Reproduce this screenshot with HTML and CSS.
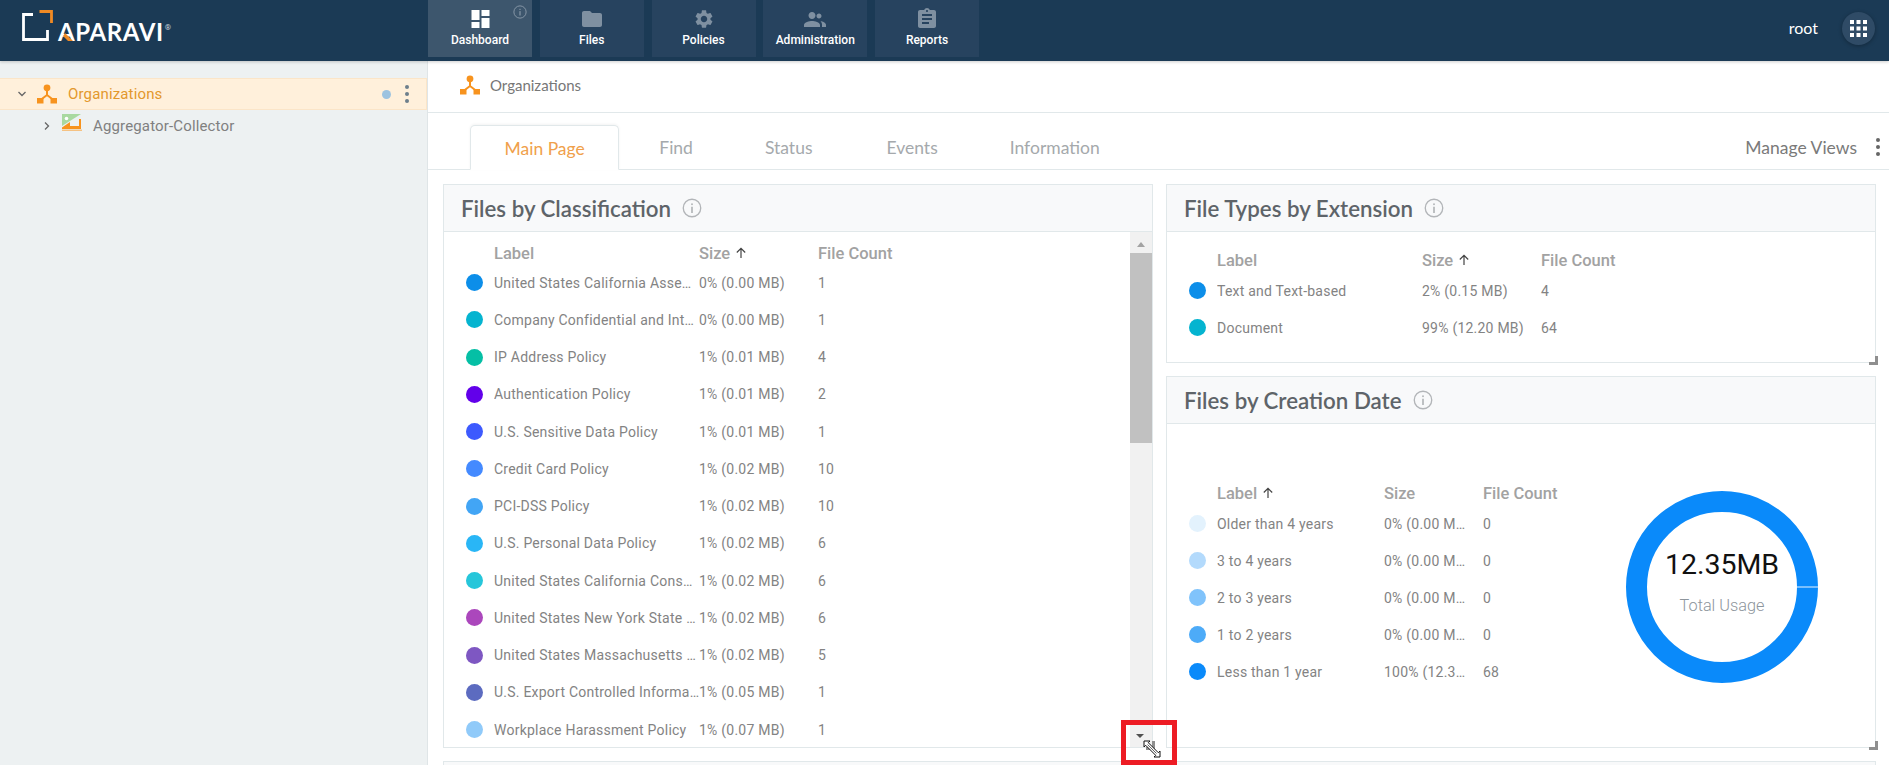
FILE: index.html
```html
<!DOCTYPE html>
<html lang="en">
<head>
<meta charset="utf-8">
<title>Aparavi Dashboard</title>
<link rel="stylesheet" href="styles.css">
</head>
<body>
<svg class="defs" width="0" height="0">
  <defs>
    <symbol id="org" viewBox="0 0 20 20">
      <circle cx="10" cy="3.800" r="3.400" fill="currentColor"/>
      <path d="M10 5v6.500M10 11l-6.500 5M10 11l6.500 5" stroke="currentColor" stroke-width="2" fill="none"/>
      <rect x="0" y="14" width="6.500" height="5.500" fill="currentColor"/>
      <rect x="13.500" y="14" width="6.500" height="5.500" fill="currentColor"/>
    </symbol>
    <symbol id="info" viewBox="0 0 24 24">
      <circle cx="12" cy="12" r="10.500" fill="none" stroke="currentColor" stroke-width="1.600"/>
      <rect x="11" y="10.500" width="2" height="7.500" fill="currentColor"/>
      <rect x="11" y="6.500" width="2" height="2" fill="currentColor"/>
    </symbol>
    <symbol id="up" viewBox="0 0 12 12">
      <path d="M6 11V1.500M1.800 5.500L6 1.300l4.200 4.200" fill="none" stroke="currentColor" stroke-width="1.200"/>
    </symbol>
  </defs>
</svg>

<header class="topbar">
  <div class="logo">
    <svg class="logo-mark" viewBox="0 0 31 31" width="31" height="31">
      <path d="M11 4.500H1.500V29.500H25.500V20" fill="none" stroke="#fff" stroke-width="2.800"/>
      <path d="M17.500 1.500H29.500V13" fill="none" stroke="#f08a24" stroke-width="2.800"/>
    </svg>
    <span class="logo-text">APARAVI</span><span class="logo-reg">®</span>
    <svg class="logo-wedge" viewBox="0 0 10 8" width="10" height="8"><path d="M2 0l8 8H5L0 3z" fill="#f08a24"/></svg>
  </div>
  <nav class="nav">
    <a class="nav-item active">
      <svg class="nav-icon i-dash" viewBox="3 3 18 18"><path d="M3 13h8V3H3v10zm0 8h8v-6H3v6zm10 0h8V11h-8v10zm0-18v6h8V3h-8z"/></svg>
      <span>Dashboard</span>
      <svg class="nav-info"><use href="#info"/></svg>
    </a>
    <a class="nav-item">
      <svg class="nav-icon dim i-files" viewBox="2 4 20 16"><path d="M10 4H4c-1.100 0-2 .9-2 2v12c0 1.100.9 2 2 2h16c1.100 0 2-.9 2-2V8c0-1.100-.9-2-2-2h-8l-2-2z"/></svg>
      <span>Files</span>
    </a>
    <a class="nav-item">
      <svg class="nav-icon dim i-gear" viewBox="2.500 2 19 20"><path d="M19.140 12.940c.04-.3.06-.61.06-.94 0-.32-.02-.64-.07-.94l2.030-1.580c.18-.14.23-.41.12-.61l-1.920-3.320c-.12-.22-.37-.29-.59-.22l-2.390.96c-.5-.38-1.030-.7-1.620-.94l-.36-2.540c-.04-.24-.24-.41-.48-.41h-3.840c-.24 0-.43.17-.47.41l-.36 2.540c-.59.24-1.130.57-1.620.94l-2.390-.96c-.22-.08-.47 0-.59.22L2.740 8.870c-.12.21-.08.47.12.61l2.030 1.580c-.05.3-.09.63-.09.94s.02.64.07.94l-2.030 1.580c-.18.14-.23.41-.12.61l1.920 3.320c.12.22.37.29.59.22l2.390-.96c.5.38 1.030.7 1.620.94l.36 2.540c.05.24.24.41.48.41h3.840c.24 0 .44-.17.47-.41l.36-2.540c.59-.24 1.130-.56 1.620-.94l2.390.96c.22.08.47 0 .59-.22l1.920-3.320c.12-.22.07-.47-.12-.61l-2.010-1.580zM12 15.600c-1.980 0-3.600-1.620-3.600-3.600s1.620-3.600 3.600-3.600 3.600 1.620 3.600 3.600-1.620 3.600-3.600 3.600z"/></svg>
      <span>Policies</span>
    </a>
    <a class="nav-item">
      <svg class="nav-icon dim i-people" viewBox="1 5 22 15"><path d="M9 12c1.930 0 3.500-1.570 3.500-3.500S10.930 5 9 5 5.500 6.570 5.500 8.500 7.070 12 9 12zm0 2c-2.670 0-8 1.340-8 4v2h16v-2c0-2.660-5.330-4-8-4zm7-2.500c1.380 0 2.500-1.120 2.500-2.500S17.380 6.500 16 6.500 13.500 7.620 13.500 9s1.120 2.500 2.500 2.500zm1.500 2.600c1.900.5 5.500 1.700 5.500 3.900v2h-4v-2.300c0-1.400-.7-2.600-1.500-3.600z"/></svg>
      <span>Administration</span>
    </a>
    <a class="nav-item">
      <svg class="nav-icon dim i-rep" viewBox="3 1 18 20"><path d="M19 3h-4.180C14.400 1.840 13.300 1 12 1c-1.300 0-2.400.84-2.820 2H5c-1.100 0-2 .9-2 2v14c0 1.100.9 2 2 2h14c1.100 0 2-.9 2-2V5c0-1.100-.9-2-2-2zm-7 0c.55 0 1 .45 1 1s-.45 1-1 1-1-.45-1-1 .45-1 1-1zm2 14H7v-2h7v2zm3-4H7v-2h10v2zm0-4H7V7h10v2z"/></svg>
      <span>Reports</span>
    </a>
  </nav>
  <div class="user">
    <span class="user-name">root</span>
    <span class="apps">
      <svg viewBox="0 0 17 17" width="17" height="17" fill="#fff">
        <rect x="0" y="0" width="4" height="4"/><rect x="6.500" y="0" width="4" height="4"/><rect x="13" y="0" width="4" height="4"/>
        <rect x="0" y="6.500" width="4" height="4"/><rect x="6.500" y="6.500" width="4" height="4"/><rect x="13" y="6.500" width="4" height="4"/>
        <rect x="0" y="13" width="4" height="4"/><rect x="6.500" y="13" width="4" height="4"/><rect x="13" y="13" width="4" height="4"/>
      </svg>
    </span>
  </div>
</header>

<div class="body-row">
  <aside class="sidebar">
    <div class="tree-row selected">
      <svg class="chev" viewBox="0 0 10 10"><path d="M1.500 3l3.500 3.500L8.500 3" fill="none" stroke="#666" stroke-width="1.300"/></svg>
      <svg class="org-icon"><use href="#org"/></svg>
      <span class="tree-label">Organizations</span>
      <span class="status-dot"></span>
      <span class="kebab"><i></i><i></i><i></i></span>
    </div>
    <div class="tree-row child">
      <svg class="chev" viewBox="0 0 10 10"><path d="M3 1.500L6.500 5 3 8.500" fill="none" stroke="#666" stroke-width="1.300"/></svg>
      <svg class="agg-icon" viewBox="0 0 20 17" width="20" height="17">
        <path d="M0 0h19L0 12z" fill="#a9d9a0"/>
        <circle cx="4.500" cy="4.500" r="1.800" fill="#fff"/>
        <path d="M0 13.500L8 8v4h9V5h2v10H0z" fill="#f7931e"/>
        <path d="M0 15.500h20V17H0z" fill="#f5c283"/>
      </svg>
      <span class="tree-label">Aggregator-Collector</span>
    </div>
  </aside>

  <main class="content">
    <div class="crumbs">
      <svg class="org-icon small"><use href="#org"/></svg>
      <span>Organizations</span>
    </div>
    <div class="tabs">
      <a class="tab active">Main Page</a>
      <a class="tab">Find</a>
      <a class="tab">Status</a>
      <a class="tab spaced">Events</a>
      <a class="tab">Information</a>
      <span class="views">Manage Views</span>
      <span class="kebab dark"><i></i><i></i><i></i></span>
    </div>

    <div class="board">
      <section class="panel tall">
        <h2 class="panel-head">Files by Classification <svg class="info"><use href="#info"/></svg></h2>
        <div class="scroll-body">
          <div class="table t-class">
            <div class="row head"><span></span><span>Label</span><span>Size <svg class="up"><use href="#up"/></svg></span><span>File Count</span></div>
            <div class="row"><i class="dot c1"></i><span class="label">United States California Assembly Bill 1</span><span>0% (0.00 MB)</span><span>1</span></div>
            <div class="row"><i class="dot c2"></i><span class="label">Company Confidential and Internal Policy</span><span>0% (0.00 MB)</span><span>1</span></div>
            <div class="row"><i class="dot c3"></i><span class="label">IP Address Policy</span><span>1% (0.01 MB)</span><span>4</span></div>
            <div class="row"><i class="dot c4"></i><span class="label">Authentication Policy</span><span>1% (0.01 MB)</span><span>2</span></div>
            <div class="row"><i class="dot c5"></i><span class="label">U.S. Sensitive Data Policy</span><span>1% (0.01 MB)</span><span>1</span></div>
            <div class="row"><i class="dot c6"></i><span class="label">Credit Card Policy</span><span>1% (0.02 MB)</span><span>10</span></div>
            <div class="row"><i class="dot c7"></i><span class="label">PCI-DSS Policy</span><span>1% (0.02 MB)</span><span>10</span></div>
            <div class="row"><i class="dot c8"></i><span class="label">U.S. Personal Data Policy</span><span>1% (0.02 MB)</span><span>6</span></div>
            <div class="row"><i class="dot c9"></i><span class="label">United States California Consumer Privacy</span><span>1% (0.02 MB)</span><span>6</span></div>
            <div class="row"><i class="dot c10"></i><span class="label">United States New York State Privacy Act</span><span>1% (0.02 MB)</span><span>6</span></div>
            <div class="row"><i class="dot c11"></i><span class="label">United States Massachusetts Data Privacy</span><span>1% (0.02 MB)</span><span>5</span></div>
            <div class="row"><i class="dot c12"></i><span class="label wide">U.S. Export Controlled Information Policy</span><span>1% (0.05 MB)</span><span>1</span></div>
            <div class="row"><i class="dot c13"></i><span class="label">Workplace Harassment Policy</span><span>1% (0.07 MB)</span><span>1</span></div>
          </div>
          <div class="scrollbar">
            <span class="arrow-up"></span>
            <span class="thumb"></span>
            <span class="arrow-down"></span>
          </div>
        </div>
        <span class="handle"></span>
      </section>

      <div class="stack">
        <section class="panel short">
          <h2 class="panel-head">File Types by Extension <svg class="info"><use href="#info"/></svg></h2>
          <div class="table t-types">
            <div class="row head"><span></span><span>Label</span><span>Size <svg class="up"><use href="#up"/></svg></span><span>File Count</span></div>
            <div class="row"><i class="dot c1"></i><span class="label">Text and Text-based</span><span>2% (0.15 MB)</span><span>4</span></div>
            <div class="row"><i class="dot c2"></i><span class="label">Document</span><span>99% (12.20 MB)</span><span>64</span></div>
          </div>
          <span class="handle"></span>
        </section>
        <section class="panel grow">
          <h2 class="panel-head">Files by Creation Date <svg class="info"><use href="#info"/></svg></h2>
          <div class="date-body">
            <div class="table t-date">
              <div class="row head"><span></span><span>Label <svg class="up"><use href="#up"/></svg></span><span>Size</span><span>File Count</span></div>
              <div class="row"><i class="dot d1"></i><span class="label">Older than 4 years</span><span class="label size-cell">0% (0.00 MB)</span><span>0</span></div>
              <div class="row"><i class="dot d2"></i><span class="label">3 to 4 years</span><span class="label size-cell">0% (0.00 MB)</span><span>0</span></div>
              <div class="row"><i class="dot d3"></i><span class="label">2 to 3 years</span><span class="label size-cell">0% (0.00 MB)</span><span>0</span></div>
              <div class="row"><i class="dot d4"></i><span class="label">1 to 2 years</span><span class="label size-cell">0% (0.00 MB)</span><span>0</span></div>
              <div class="row"><i class="dot d5"></i><span class="label">Less than 1 year</span><span class="label size-cell">100% (12.35 MB)</span><span>68</span></div>
            </div>
            <div class="donut">
              <svg viewBox="0 0 192 192" width="192" height="192">
                <circle cx="96" cy="96" r="85.500" fill="none" stroke="#0a8afa" stroke-width="21"/>
                <path d="M171 96h21" stroke="#e8f4ff" stroke-width="1"/>
              </svg>
              <div class="donut-text">
                <strong>12.35MB</strong>
                <span>Total Usage</span>
              </div>
            </div>
          </div>
          <span class="handle"></span>
        </section>
      </div>

      <section class="panel peek"></section>
      <section class="panel peek"></section>
    </div>
  </main>
</div>

<div class="callout">
  <svg class="cursor" viewBox="0 0 18 18" width="18" height="18">
    <path d="M1 1h6L5.300 2.700l10 10L17 11v6h-6l1.700-1.700-10-10L1 7z" fill="#fff" stroke="#111" stroke-width="1"/>
    <path d="M4.500 4.500l9 9" stroke="#666" stroke-width="1"/>
  </svg>
</div>
</body>
</html>
```
FILE: styles.css
```css
* { box-sizing: border-box; }
html, body { margin: 0; height: 765px; overflow: hidden; }
body { font-family: Roboto, "Liberation Sans", sans-serif; color: #777; background: #fff; position: relative; }
.defs { position: absolute; }

.topbar { height: 61px; background: #1b3a55; display: flex; align-items: flex-start; box-shadow: 0 1px 3px rgba(0,0,0,.2); position: relative; }
.logo { width: 428px; flex: none; height: 61px; display: flex; align-items: flex-start; padding: 10px 0 0 22px; color: #fff; position: relative; }
.logo-mark { display: block; flex: none; }
.logo-text { font-family: Lato, sans-serif; font-weight: 700; font-size: 24px; line-height: 24px; margin: 10px 0 0 5px; letter-spacing: .6px; }
.logo-reg { font-size: 8px; margin: 13px 0 0 1px; color: #cfd6dc; }
.logo-wedge { position: absolute; left: 63px; top: 33px; }

.nav { display: flex; gap: 7.750px; }
.nav-item { width: 104px; height: 57px; background: #27435f; display: flex; flex-direction: column; align-items: center; position: relative; color: #fff; font-size: 12px; font-weight: 500; }
.nav-item.active { background: #3d566d; }
.nav-item > span { position: absolute; top: 32px; line-height: 16px; }
.nav-icon { fill: #fff; display: block; }
.nav-icon.dim { fill: #7f90a1; }
.i-dash { width: 19px; height: 18px; margin-top: 10px; }
.i-files { width: 20px; height: 16px; margin-top: 11px; }
.i-gear { width: 20px; height: 18px; margin-top: 10px; }
.i-people { width: 22px; height: 15px; margin-top: 12px; }
.i-rep { width: 18px; height: 20px; margin-top: 8px; }
.nav-info { position: absolute; top: 5px; right: 5px; width: 14px; height: 14px; color: #8a9aa9; }

.user { margin-left: auto; display: flex; align-items: center; height: 57px; padding-right: 14px; }
.user-name { color: #fff; font-family: Lato, sans-serif; font-size: 16px; margin-right: 24px; padding-bottom: 2px; }
.apps { width: 33px; height: 33px; border-radius: 50%; background: #2f4b66; display: flex; align-items: center; justify-content: center; box-shadow: 0 1px 4px rgba(0,0,0,.3); }

.body-row { display: flex; height: 704px; }
.sidebar { width: 428px; flex: none; background: #edf1f2; border-right: 1px solid #dfe5e7; padding-top: 17px; }
.tree-row { display: flex; align-items: center; font-size: 15px; letter-spacing: .15px; }
.tree-row.selected { height: 32px; background: #fff0db; border: 1px solid #fbe5c8; border-left: 0; color: #e3982c; padding-left: 17px; }
.chev { width: 10px; height: 10px; flex: none; }
.org-icon { width: 20px; height: 20px; color: #f7931e; margin-left: 10px; flex: none; }
.org-icon.small { width: 20px; height: 20px; margin: 0 10px 0 0; }
.tree-label { margin-left: 11px; }
.status-dot { width: 9px; height: 9px; border-radius: 50%; background: #9dc3e0; margin-left: auto; margin-right: 14px; }
.kebab { display: flex; flex-direction: column; gap: 3px; margin-right: 17px; }
.kebab i { width: 4px; height: 4px; border-radius: 50%; background: #6d7f8c; display: block; }
.kebab.dark { margin: 0 0 0 19px; }
.kebab.dark i { background: #666; }
.tree-row.child { padding-left: 42px; height: 32px; color: #808080; }
.agg-icon { margin-left: 10px; margin-top: -8px; flex: none; }
.child .tree-label { margin-left: 11px; }

.content { flex: 1; min-width: 0; }
.crumbs { height: 52px; border-bottom: 1px solid #e1e8ea; display: flex; align-items: center; padding: 0 0 3px 32px; font-family: Lato, sans-serif; font-size: 15px; color: #777; }
.tabs { height: 57px; border-bottom: 1px solid #e1e8ea; display: flex; align-items: center; padding: 12px 9px 0 42px; font-family: Lato, sans-serif; font-size: 17.500px; color: #a5a9ac; }
.tab { padding: 0 36px; }
.tab.spaced { margin-left: 2px; }
.tab.active { height: 45px; padding: 0 33.500px; line-height: 46px; align-self: flex-end; margin-bottom: -1px; color: #f0a04b; background: #fff; border: 1px solid #e1e8ea; border-bottom: 1px solid #fff; border-radius: 5px 5px 0 0; box-shadow: 0 -1px 3px rgba(0,0,0,.05); margin-right: 4px; }
.views { margin-left: auto; color: #7a7a7a; font-size: 17.500px; }

.board { display: grid; grid-template-columns: 710px 710px; grid-template-rows: 564px 40px; column-gap: 13px; row-gap: 13px; padding: 14px 0 0 15px; }
.panel { border: 1px solid #e1e8ea; background: #fff; position: relative; }
.panel-head { height: 47px; margin: 0; padding: 0 0 0 17px; background: #f8f9fa; border-bottom: 1px solid #e1e8ea; display: flex; align-items: center; font-family: Lato, sans-serif; font-size: 22.300px; font-weight: 600; color: #5e6469; }
.info { width: 20px; height: 20px; color: #b2b5b8; margin-left: 11px; }
.stack { display: flex; flex-direction: column; gap: 13px; min-height: 0; }
.panel.short { height: 179px; }
.panel.grow { flex: 1; }
.panel.peek { background: #f8f9fa; }
.handle { position: absolute; right: -3px; bottom: -3px; width: 9px; height: 9px; border-right: 3px solid #8f8f8f; border-bottom: 3px solid #8f8f8f; }

.scroll-body { display: flex; height: 515px; overflow: hidden; }
.table { font-size: 14px; letter-spacing: .23px; color: #838383; }
.t-class { flex: 1; padding: 11px 0 0 17px; }
.row { display: grid; align-items: center; height: 37.100px; }
.t-class .row { height: 37.250px; }
.row.head, .t-class .row.head { height: 21px; font-size: 16.500px; font-weight: 500; color: #a2a2a2; letter-spacing: 0; }
.t-class .row { grid-template-columns: 33px 205px 119px 1fr; }
.t-types { padding: 16px 0 0 17px; }
.t-types .row.head { height: 24px; }
.t-types .row { grid-template-columns: 33px 205px 119px 1fr; }
.date-body { display: flex; padding: 0 0 0 17px; }
.t-date { padding-top: 58px; width: 442px; flex: none; }
.t-date .row.head { height: 23px; }
.t-date .row { grid-template-columns: 33px 167px 99px 1fr; }
.up { width: 12px; height: 12px; color: #444; margin-left: 1px; }
.label { white-space: nowrap; overflow: hidden; text-overflow: ellipsis; padding-right: 1px; }
.label.wide { margin-right: -3px; }
.label.size-cell { padding-right: 16px; }
.dot { width: 17px; height: 17px; border-radius: 50%; display: block; margin-left: 5px; }

.c1 { background: #0c8ee9; } .c2 { background: #05b4d0; } .c3 { background: #05bfa5; }
.c4 { background: #6200ea; } .c5 { background: #3d5afe; } .c6 { background: #448aff; }
.c7 { background: #42a5f5; } .c8 { background: #29b6f6; } .c9 { background: #26c6da; }
.c10 { background: #ab47bc; } .c11 { background: #7e57c2; } .c12 { background: #5c6bc0; }
.c13 { background: #90caf9; }
.d1 { background: #e3f2fd; } .d2 { background: #b3dafc; } .d3 { background: #80c3fb; }
.d4 { background: #4dabf8; } .d5 { background: #0a8afa; }

.scrollbar { width: 22px; flex: none; background: #f1f1f1; position: relative; }
.thumb { position: absolute; top: 21px; left: 0; width: 100%; height: 190px; background: #c1c1c1; }
.arrow-up { position: absolute; top: 10px; left: 7px; border: 4px solid transparent; border-top: 0; border-bottom: 5px solid #a3a3a3; }
.arrow-down { position: absolute; bottom: 9px; left: 6px; border: 4.500px solid transparent; border-bottom: 0; border-top: 4px solid #505050; }

.donut { position: relative; width: 192px; height: 192px; margin-top: 67px; flex: none; }
.donut svg { display: block; }
.donut-text { position: absolute; inset: 0; display: flex; flex-direction: column; align-items: center; }
.donut-text strong { font-weight: 400; font-size: 28.500px; line-height: 32px; color: #111; margin-top: 58px; }
.donut-text span { font-size: 16.300px; font-weight: 300; line-height: 20px; color: #8d959c; margin-top: 15px; }

.callout { position: absolute; left: 1121px; top: 720px; width: 56px; height: 45px; border: 5px solid #ed1c24; }
.cursor { position: absolute; left: 17px; top: 15px; }
```
